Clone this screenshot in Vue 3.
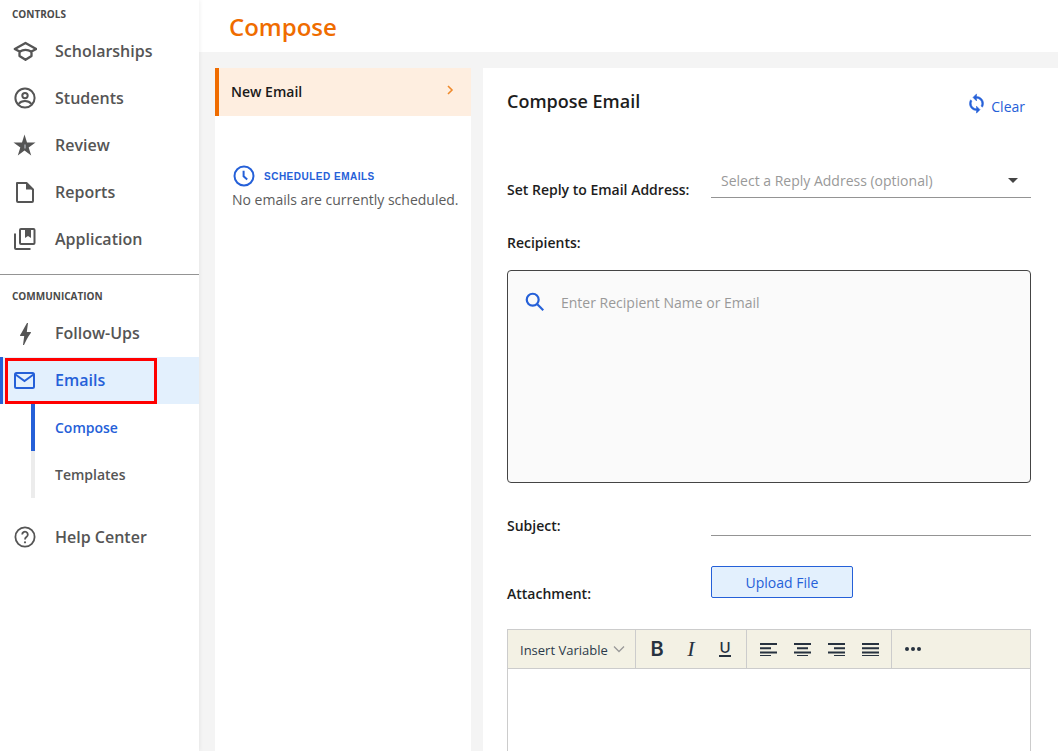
<template>
  <div class="page">
    <aside class="sidebar">
      <div class="nav-label first">CONTROLS</div>
      <a v-for="item in controls" :key="item.name" class="nav-item">
        <svg class="nav-icon" viewBox="0 0 24 24" v-html="item.icon"></svg>
        <span>{{ item.name }}</span>
      </a>
      <hr class="divider" />
      <div class="nav-label second">COMMUNICATION</div>
      <a class="nav-item">
        <svg class="nav-icon" viewBox="0 0 24 24" v-html="icons.bolt"></svg>
        <span>Follow-Ups</span>
      </a>
      <a class="nav-item active">
        <svg class="nav-icon" viewBox="0 0 24 24" v-html="icons.mail"></svg>
        <span>Emails</span>
        <div class="highlight"></div>
      </a>
      <a class="sub-item current">Compose</a>
      <a class="sub-item">Templates</a>
      <a class="nav-item help">
        <svg class="nav-icon" viewBox="0 0 24 24" v-html="icons.help"></svg>
        <span>Help Center</span>
      </a>
    </aside>

    <main class="main">
      <header class="top">
        <h1>Compose</h1>
      </header>
      <div class="columns">
        <section class="list-panel">
          <div class="new-email">
            <span>New Email</span>
            <svg class="chevron" viewBox="0 0 8 12"><path d="M2 2l4 4-4 4" /></svg>
          </div>
          <div class="scheduled">
            <div class="scheduled-head">
              <svg class="clock" viewBox="0 0 22 22">
                <circle cx="11" cy="11" r="9.5" />
                <path d="M10.6 5.8v5.4l3.6 3.2" />
              </svg>
              <span>SCHEDULED EMAILS</span>
            </div>
            <p>No emails are currently scheduled.</p>
          </div>
        </section>

        <section class="form-panel">
          <div class="form-head">
            <h2>Compose Email</h2>
            <a class="clear">
              <svg viewBox="0 0 24 24"><path d="M12 4V1L8 5l4 4V6c3.31 0 6 2.69 6 6 0 1.01-.25 1.97-.7 2.8l1.46 1.46C19.54 15.03 20 13.57 20 12c0-4.42-3.58-8-8-8zm0 14c-3.31 0-6-2.69-6-6 0-1.01.25-1.97.7-2.8L5.24 7.74C4.46 8.97 4 10.43 4 12c0 4.42 3.58 8 8 8v3l4-4-4-4v3z" /></svg>
              <span>Clear</span>
            </a>
          </div>

          <div class="row reply">
            <label>Set Reply to Email Address:</label>
            <div class="select">
              <span>Select a Reply Address (optional)</span>
              <i class="caret"></i>
            </div>
          </div>

          <label class="recipients-label">Recipients:</label>
          <div class="recipients">
            <svg viewBox="0 0 24 24"><circle cx="9.5" cy="9.5" r="6.5" /><path d="M14.5 14.5l6.5 6.5" /></svg>
            <span>Enter Recipient Name or Email</span>
          </div>

          <div class="row subject">
            <label>Subject:</label>
            <div class="line"></div>
          </div>

          <div class="row attachment">
            <label>Attachment:</label>
            <button type="button">Upload File</button>
          </div>

          <div class="editor">
            <div class="toolbar">
              <div class="group variable">
                <span>Insert Variable</span>
                <svg viewBox="0 0 12 8"><path d="M1 1.5l5 5 5-5" /></svg>
              </div>
              <div class="group format">
                <span class="tool tool-b">B</span>
                <span class="tool tool-i">I</span>
                <span class="tool"><span class="tool-u">U</span></span>
              </div>
              <div class="group align">
                <span v-for="a in aligns" :key="a" class="tool">
                  <svg viewBox="0 0 17 14"><path :d="a" /></svg>
                </span>
              </div>
              <div class="group more">
                <i></i><i></i><i></i>
              </div>
            </div>
            <div class="editor-body"></div>
          </div>
        </section>
      </div>
    </main>
  </div>
</template>

<script setup>
const line = 'fill="none" stroke="currentColor" stroke-width="2"';

const icons = {
  cap: `<path d="M12.5 4 1.800 10l4.700 2.600V17l6 3.800 6-3.800v-4.400L23.200 10z" fill="none" stroke="currentColor" stroke-width="2.300" stroke-linejoin="round"/><path d="M6.500 12.800c3.800-2.400 8.200-2.400 12 0" fill="none" stroke="currentColor" stroke-width="2.300"/>`,
  user: `<circle cx="12" cy="12" r="9.600" ${line}/><circle cx="12" cy="9.600" r="2.700" ${line}/><path d="M5.600 18c1.600-2 4-2.900 6.400-2.900s4.800.9 6.400 2.900" ${line}/>`,
  star: '<path d="M11.500 1.500l2.500 7.900 8.500.2-6.800 4.800 2.500 8.100-6.700-5-6.700 5 2.500-8.100L.5 9.600l8.500-.2z" fill="currentColor"/><path d="M12 11.500v4" stroke="#cfd3dc" stroke-width="1"/>',
  file: `<path d="M4 3h9.500L20 9.500V21a1 1 0 0 1-1 1H5a1 1 0 0 1-1-1z" ${line} stroke-linejoin="round"/><path d="M13 2.500v7h7.500" fill="currentColor"/>`,
  book: `<path d="M8 2h12.500a1 1 0 0 1 1 1v13a1 1 0 0 1-1 1H8a1 1 0 0 1-1-1V3a1 1 0 0 1 1-1z" ${line}/><path d="M12 2h6v9l-3-2-3 2z" fill="currentColor"/><path d="M2 6.500V21a1 1 0 0 0 1 1h14.500" ${line}/>`,
  bolt: '<path d="M11 24h-1l1.200-9H7.500c-.9 0-.5-.7-.2-1.200C9 11 11.500 6.500 14 2h1l-1.200 9h3.700c.5 0 .6.400.3.900C14.500 16.500 12.500 20.500 11 24z" fill="currentColor"/>',
  mail: `<rect x="2" y="5" width="19" height="15" rx="1.500" ${line}/><path d="M2.500 6.500 11.500 13l9-6.500" ${line}/>`,
  help: '<circle cx="12" cy="12" r="9.600" fill="none" stroke="currentColor" stroke-width="1.800"/><path d="M9.200 9.500a2.800 2.800 0 1 1 4.400 2.300c-1 .7-1.600 1.200-1.600 2.700" fill="none" stroke="currentColor" stroke-width="1.800"/><circle cx="12" cy="17.300" r="1.100" fill="currentColor"/>'
};

const controls = [
  { name: 'Scholarships', icon: icons.cap },
  { name: 'Students', icon: icons.user },
  { name: 'Review', icon: icons.star },
  { name: 'Reports', icon: icons.file },
  { name: 'Application', icon: icons.book }
];

const aligns = [
  'M0 1h17v2H0zM0 5.200h11v2H0zM0 9.400h17v2H0zM0 13h11v1H0z',
  'M0 1h17v2H0zM3 5.200h11v2H3zM0 9.400h17v2H0zM3 13h11v1H3z',
  'M0 1h17v2H0zM6 5.200h11v2H6zM0 9.400h17v2H0zM6 13h11v1H6z',
  'M0 1h17v2H0zM0 5.200h17v2H0zM0 9.400h17v2H0zM0 13h17v1H0z'
];
</script>

<style>
html, body { margin: 0; height: 100%; overflow: hidden; }
</style>

<style scoped>
.page {
  width: 1058px;
  height: 751px;
  display: flex;
  overflow: hidden;
  font-family: "Open Sans", "Liberation Sans", sans-serif;
  background: #f4f4f4;
}

.sidebar {
  position: relative;
  z-index: 1;
  width: 199px;
  flex: none;
  background: #fff;
  color: #555;
  box-shadow: 1px 0 4px rgba(0, 0, 0, 0.06);
}
.nav-label {
  padding-left: 12px;
  font-size: 10px;
  font-weight: 700;
  color: #4a4a4a;
}
.nav-label.first { height: 28px; line-height: 29px; }
.nav-label.second { height: 35px; line-height: 43px; }
.divider {
  margin: 11px 0 0;
  border: 0;
  height: 1px;
  background: #949494;
}
.nav-item {
  position: relative;
  height: 47px;
  box-sizing: border-box;
  display: flex;
  align-items: center;
  padding: 0 0 1px 13px;
  font-size: 16px;
  font-weight: 600;
}
.nav-item span { margin-top: -1px; }
.nav-icon {
  width: 24px;
  height: 24px;
  margin-right: 18px;
  flex: none;
}
.nav-item.active {
  background: #e3f0fd;
  color: #2560d8;
  box-shadow: inset 3px 0 0 #2560d8;
}
.nav-item.help { margin-top: 16px; }
.highlight {
  position: absolute;
  left: 5px;
  top: 1px;
  width: 152px;
  height: 46px;
  box-sizing: border-box;
  border: 3px solid #f00;
}
.sub-item {
  height: 47px;
  margin-left: 31px;
  padding-left: 20px;
  border-left: 4px solid #ececec;
  display: flex;
  align-items: center;
  font-size: 14px;
  font-weight: 600;
}
.sub-item.current {
  border-left-color: #2560d8;
  color: #2560d8;
}

.main {
  flex: 1;
  min-width: 0;
}
.top {
  height: 52px;
  background: #fff;
  padding-left: 30px;
}
.top h1 {
  margin: 0;
  font-size: 24px;
  font-weight: 600;
  line-height: 54px;
  color: #ef6c00;
}
.columns {
  display: flex;
  gap: 12px;
  padding: 16px 0 0 16px;
  height: 683px;
}

.list-panel {
  width: 256px;
  flex: none;
  background: #fff;
}
.new-email {
  height: 48px;
  box-sizing: border-box;
  display: flex;
  align-items: center;
  justify-content: space-between;
  padding: 0 17px 2px 12px;
  border-left: 4px solid #ef6c00;
  background: #feeee0;
  font-size: 14px;
  font-weight: 600;
  color: #1a1a1a;
}
.chevron {
  width: 8px;
  height: 12px;
  margin-top: -3px;
  fill: none;
  stroke: #ef8a2c;
  stroke-width: 1.6;
}
.scheduled {
  padding: 49px 0 0 17px;
}
.scheduled-head {
  display: flex;
  align-items: center;
  gap: 9px;
  margin-left: 1px;
  font-family: "Liberation Sans", Arial, sans-serif;
  font-size: 10px;
  font-weight: 700;
  letter-spacing: 0.5px;
  color: #2560d8;
}
.clock {
  width: 22px;
  height: 22px;
  fill: none;
  stroke: #2560d8;
  stroke-width: 2;
}
.scheduled p {
  margin: 3px 0 0;
  font-size: 14px;
  line-height: 19px;
  color: #5c5c5c;
}

.form-panel {
  flex: 1;
  min-width: 0;
  background: #fff;
  padding: 0 27px 0 24px;
  overflow: hidden;
}
.form-head {
  height: 88px;
  display: flex;
  justify-content: space-between;
  align-items: flex-start;
}
.form-head h2 {
  margin: 20px 0 0;
  font-size: 18px;
  font-weight: 600;
  line-height: 27px;
  color: #1d1d1d;
}
.clear {
  display: flex;
  align-items: flex-start;
  gap: 4px;
  margin: 25px 6px 0 0;
  font-size: 14px;
  line-height: 19px;
  color: #2560d8;
}
.clear span { padding-top: 4px; }
.clear svg {
  width: 21px;
  height: 21px;
  fill: #2560d8;
  stroke: #2560d8;
  stroke-width: 0.6;
}
label {
  font-size: 14px;
  font-weight: 600;
  line-height: 19px;
  color: #1d1d1d;
}
.row {
  display: flex;
}
.row label {
  width: 204px;
  flex: none;
}
.reply {
  height: 42px;
  align-items: flex-end;
}
.reply label { margin-bottom: -1px; }
.select {
  flex: 1;
  height: 42px;
  box-sizing: border-box;
  border-bottom: 1px solid #949494;
  display: flex;
  align-items: center;
  justify-content: space-between;
  padding: 8px 13px 0 10px;
  font-size: 14px;
  color: #999;
}
.caret {
  width: 0;
  height: 0;
  border: 5px solid transparent;
  border-top-color: #444;
  border-bottom: 0;
}
.recipients-label {
  display: block;
  margin-top: 35px;
}
.recipients {
  margin-top: 18px;
  height: 213px;
  box-sizing: border-box;
  border: 1px solid #444;
  border-radius: 4px;
  background: #fafafa;
  display: flex;
  align-items: flex-start;
  padding: 20px 0 0 16px;
  font-size: 14px;
  color: #999;
}
.recipients svg {
  width: 22px;
  height: 22px;
  margin-right: 15px;
  flex: none;
  fill: none;
  stroke: #2560d8;
  stroke-width: 2.4;
}
.recipients span { line-height: 24px; }
.subject {
  margin-top: 33px;
  height: 20px;
}
.subject .line {
  flex: 1;
  border-bottom: 1px solid #949494;
}
.attachment {
  margin-top: 30px;
  height: 32px;
}
.attachment label { align-self: flex-end; margin-bottom: -5px; }
.attachment button {
  width: 142px;
  height: 32px;
  border: 1px solid #2560d8;
  border-radius: 2px;
  background: #e3f0fd;
  font-family: inherit;
  font-size: 14px;
  color: #2560d8;
}
.editor {
  margin-top: 31px;
  border: 1px solid #ccc;
  border-bottom: 0;
  height: 140px;
}
.toolbar {
  height: 38px;
  background: #f3f1e4;
  border-bottom: 1px solid #ccc;
  display: flex;
}
.group {
  display: flex;
  align-items: center;
  border-right: 1px solid #ccc;
  box-sizing: border-box;
}
.variable {
  width: 128px;
  padding-left: 12px;
  font-size: 13px;
  color: #2b3a4a;
}
.variable span { padding-top: 2px; }
.variable svg {
  width: 12px;
  height: 8px;
  margin-left: 5px;
  fill: none;
  stroke: #999;
  stroke-width: 1.3;
}
.format {
  width: 111px;
  padding-left: 4px;
  color: #27323f;
}
.tool {
  width: 34px;
  flex: none;
  display: flex;
  justify-content: center;
}
.tool-b {
  font-family: "Inter", sans-serif;
  font-size: 20px;
  font-weight: 600;
}
.tool-i {
  font-family: "Liberation Serif", serif;
  font-size: 22px;
  font-style: italic;
}
.tool-u {
  font-family: "Inter", sans-serif;
  font-size: 15px;
  font-weight: 500;
  line-height: 14px;
  border-bottom: 2px solid #27323f;
}
.align {
  width: 145px;
  padding-left: 4px;
}
.align svg {
  width: 17px;
  height: 14px;
  fill: #27323f;
}
.more {
  border-right: 0;
  padding-left: 13px;
  gap: 2px;
}
.more i {
  width: 4px;
  height: 4px;
  border-radius: 50%;
  background: #27323f;
}
.editor-body {
  background: #fff;
}
</style>
